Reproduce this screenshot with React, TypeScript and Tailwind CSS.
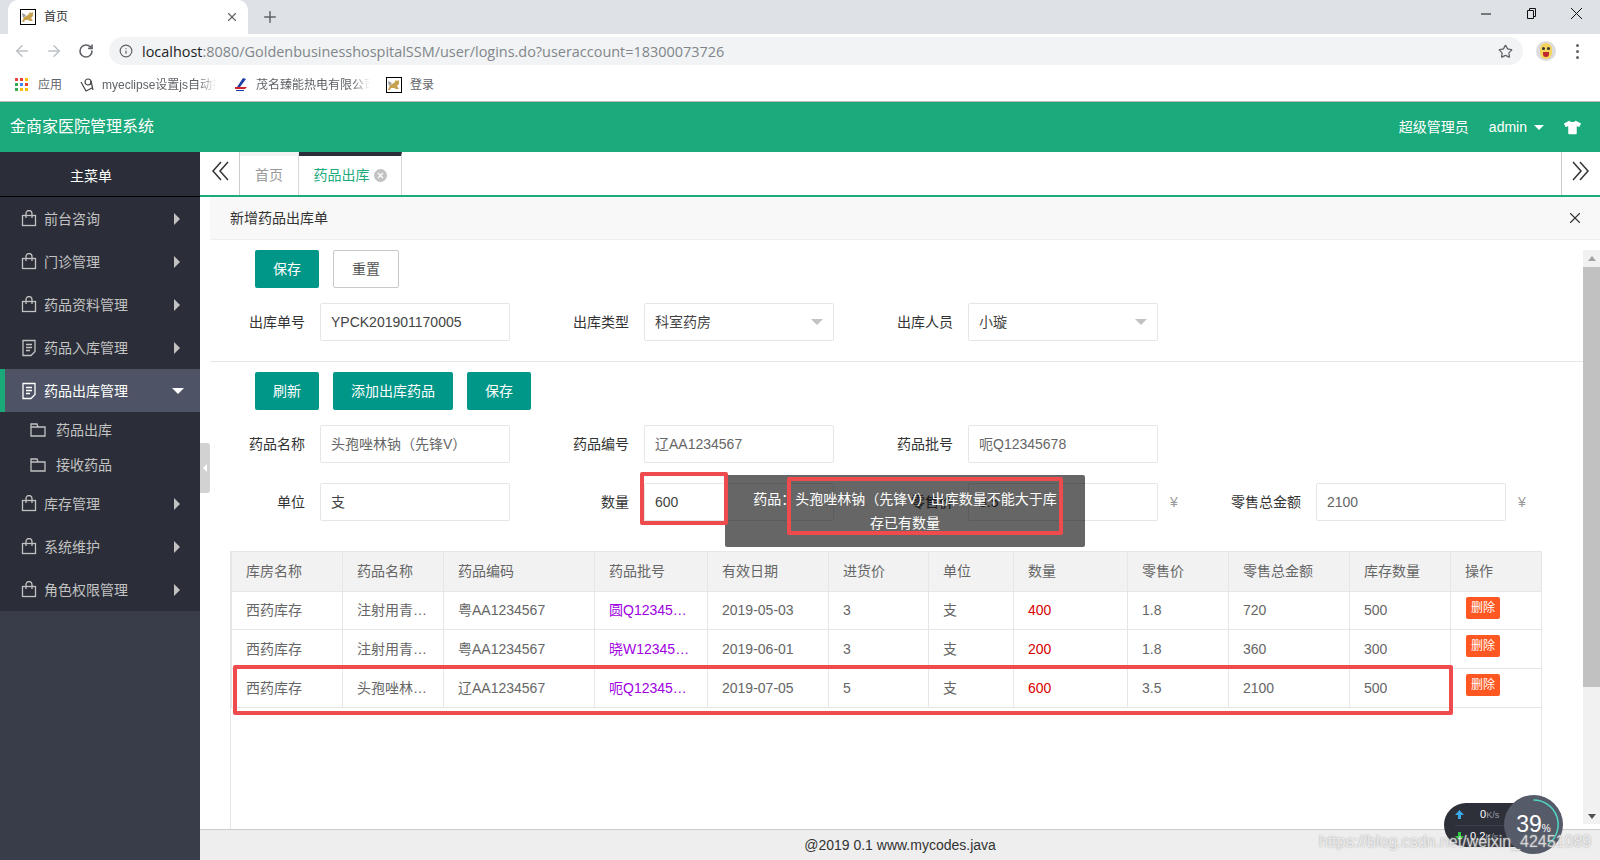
import { ArrowLeft, ArrowRight, RotateCw, Info, Star, Plus, X } from "lucide-react";
import { FaTshirt } from "react-icons/fa";

const Favicon = () => (
  <svg width="16" height="16" viewBox="0 0 16 16" className="shrink-0">
    <rect x="0.5" y="0.5" width="15" height="15" fill="#fff" stroke="#000" />
    <path d="M2 13 4 8l4-2 2-3 1 1 2-1v4l-2 2 2 3h-3L8 11H5l-1 2z" fill="#c9a24f" />
    <path d="M2 4l4 2-3 3z" fill="#999" />
  </svg>
);

const BagIcon = () => (
  <svg width="16" height="17" viewBox="0 0 16 17" fill="none" stroke="currentColor" strokeWidth="1.3" className="shrink-0">
    <rect x="1.5" y="5.5" width="13" height="10" />
    <path d="M5 8V3.5a3 3 0 0 1 6 0V8" />
  </svg>
);

const DocIcon = () => (
  <svg width="16" height="18" viewBox="0 0 16 18" fill="none" stroke="currentColor" strokeWidth="1.3" className="shrink-0">
    <path d="M2 1.5h12v11l-4 4H2z" />
    <path d="M5 5.5h6M5 8.5h6M5 11.5h4" />
  </svg>
);

const FolderIcon = () => (
  <svg width="16" height="14" viewBox="0 0 16 14" fill="none" stroke="currentColor" strokeWidth="1.3" className="shrink-0">
    <path d="M1 1h6l1 3h7v9H1zM1 4h7" />
  </svg>
);

const Menu = ({ label, icon, active }: { label: string; icon: "bag" | "doc"; active?: boolean }) => (
  <div
    className={`flex h-[43px] items-center pl-[21px] pr-[16px] ${
      active ? "bg-[#4e5465] text-white shadow-[inset_5px_0_0_#1aaa7a]" : "text-[#c2c2c2]"
    }`}
  >
    {icon === "bag" ? <BagIcon /> : <DocIcon />}
    <span className="ml-[7px] flex-1 pt-[1px] text-[14px]">{label}</span>
    {active ? (
      <span className="border-x-[6px] border-t-[6px] border-x-transparent border-t-white" />
    ) : (
      <span className="mr-[4px] border-y-[6px] border-l-[6px] border-y-transparent border-l-[#c2c2c2]" />
    )}
  </div>
);

const SubMenu = ({ label }: { label: string }) => (
  <div className="flex h-[35px] items-center pl-[30px] text-[14px] text-[#c2c2c2]">
    <FolderIcon />
    <span className="ml-[10px] pt-[1px]">{label}</span>
  </div>
);

const Btn = ({ children, plain }: { children: string; plain?: boolean }) => (
  <button
    className={`h-[38px] rounded-[2px] px-[18px] text-[14px] ${
      plain ? "border border-[#c9c9c9] bg-white text-[#555]" : "bg-[#009688] text-white"
    }`}
  >
    {children}
  </button>
);

const Field = ({ label, value, select, yuan, muted }: { label: string; value: string; select?: boolean; yuan?: boolean; muted?: boolean }) => (
  <div className="flex items-center">
    <label className="w-[90px] shrink-0 whitespace-nowrap pr-[15px] text-right text-[14px] text-[#333]">{label}</label>
    <div
      className={`relative flex h-[38px] w-[190px] items-center rounded-[2px] border border-[#e6e6e6] bg-white pl-[10px] pt-[1px] text-[14px] ${
        muted ? "text-[#666]" : "text-[#444]"
      }`}
    >
      {value}
      {select && <span className="absolute right-[10px] top-[15px] border-x-[6px] border-t-[6px] border-x-transparent border-t-[#c2c2c2]" />}
    </div>
    {yuan && <span className="ml-[12px] w-[16px] text-[14px] text-[#999]">¥</span>}
  </div>
);

const columns = ["库房名称", "药品名称", "药品编码", "药品批号", "有效日期", "进货价", "单位", "数量", "零售价", "零售总金额", "库存数量", "操作"];
const widths = [111, 101, 151, 113, 121, 100, 85, 114, 101, 121, 101, 91];

const rows = [
  { drug: "注射用青霉素钠", code: "粤AA1234567", batch: "圆Q12345678", date: "2019-05-03", buy: "3", qty: "400", sale: "1.8", total: "720", stock: "500", h: "h-[38px]" },
  { drug: "注射用青霉素钠", code: "粤AA1234567", batch: "晓W12345678", date: "2019-06-01", buy: "3", qty: "200", sale: "1.8", total: "360", stock: "300", h: "h-[39px]" },
  { drug: "头孢唑林钠（先锋V）", code: "辽AA1234567", batch: "呃Q12345678", date: "2019-07-05", buy: "5", qty: "600", sale: "3.5", total: "2100", stock: "500", h: "h-[39px]" },
];

const Cell = ({ children, className = "" }: { children: React.ReactNode; className?: string }) => (
  <td className={`overflow-hidden border border-[#e6e6e6] py-0 pl-[14px] pr-[14px] text-[14px] text-ellipsis whitespace-nowrap text-[#666] ${className}`}>{children}</td>
);

export default function App() {
  return (
    <div className="relative flex h-[860px] w-[1600px] flex-col overflow-hidden bg-white font-['Liberation_Sans','Noto_Sans_CJK_SC',sans-serif]">
      {/* browser tab strip */}
      <div className="flex h-[34px] shrink-0 items-end bg-[#dee1e6] pl-[8px]">
        <div className="flex h-[34px] w-[240px] items-center rounded-t-[10px] bg-white pl-[12px] pr-[9px]">
          <Favicon />
          <span className="ml-[8px] flex-1 text-[12px] text-[#333]">首页</span>
          <X size={14} strokeWidth={2} className="text-[#5f6368]" />
        </div>
        <Plus size={18} strokeWidth={2} className="mb-[8px] ml-[13px] text-[#5f6368]" />
        <div className="mb-[13px] ml-auto flex items-center gap-[30px] pr-[16px]">
          <svg width="15" height="15" viewBox="0 0 15 15" stroke="#111" fill="none"><path d="M2 8h10" /></svg>
          <svg width="15" height="15" viewBox="0 0 15 15" stroke="#111" fill="none"><path d="M3.5 4.5h6v8h-6zM5.5 4.5v-2h6v8h-2" /></svg>
          <svg width="15" height="15" viewBox="0 0 15 15" stroke="#111" fill="none"><path d="M2 2l11 11M13 2 2 13" /></svg>
        </div>
      </div>

      {/* address bar */}
      <div className="flex h-[34px] shrink-0 items-center bg-white">
        <ArrowLeft size={18} className="ml-[13px] text-[#bdc1c6]" />
        <ArrowRight size={18} className="ml-[14px] text-[#bdc1c6]" />
        <RotateCw size={16} strokeWidth={2.4} className="ml-[15px] text-[#5f6368]" />
        <div className="ml-[15px] flex h-[28px] w-[1414px] items-center rounded-full bg-[#f1f3f4] pl-[10px] pr-[10px]">
          <Info size={14} className="text-[#5f6368]" />
          <span className="ml-[9px] flex-1 pt-[1px] font-['Open_Sans',sans-serif] text-[14.45px] text-[#80868b]">
            <span className="text-[#202124]">localhost</span>:8080/GoldenbusinesshospitalSSM/user/logins.do?useraccount=18300073726
          </span>
          <Star size={15} strokeWidth={2} className="text-[#5f6368]" />
        </div>
        <div className="ml-[13px] flex h-[20px] w-[20px] items-center justify-center rounded-full bg-[#dcdcdc]">
          <div className="relative h-[16px] w-[12px] rounded-full bg-[#f4d35e]">
            <span className="absolute left-[2px] top-[4px] h-[3px] w-[3px] rounded-full bg-[#333]" />
            <span className="absolute right-[2px] top-[4px] h-[3px] w-[3px] rounded-full bg-[#333]" />
            <span className="absolute bottom-[2px] left-[3px] h-[5px] w-[6px] rounded-b-full bg-[#c0272d]" />
          </div>
        </div>
        <div className="ml-[20px] flex flex-col gap-[3px]">
          <span className="h-[3px] w-[3px] rounded-full bg-[#5f6368]" />
          <span className="h-[3px] w-[3px] rounded-full bg-[#5f6368]" />
          <span className="h-[3px] w-[3px] rounded-full bg-[#5f6368]" />
        </div>
      </div>

      {/* bookmarks */}
      <div className="flex h-[34px] shrink-0 items-center border-b border-[#bbb] bg-white pl-[15px] text-[12px] text-[#5f6368]">
        <div className="grid w-[13px] grid-cols-3 gap-[2px]">
          <span className="h-[3px] bg-[#ea4335]" /><span className="h-[3px] bg-[#ea4335]" /><span className="h-[3px] bg-[#fbbc05]" />
          <span className="h-[3px] bg-[#34a853]" /><span className="h-[3px] bg-[#4285f4]" /><span className="h-[3px] bg-[#ea4335]" />
          <span className="h-[3px] bg-[#34a853]" /><span className="h-[3px] bg-[#fbbc05]" /><span className="h-[3px] bg-[#fbbc05]" />
        </div>
        <span className="ml-[10px] w-[42px]">应用</span>
        <svg width="14" height="16" viewBox="0 0 14 16" fill="none" stroke="#444" strokeWidth="1.2">
          <circle cx="8" cy="5" r="3" /><path d="M1 5l5 9 6-3M11 4l2 9" />
        </svg>
        <span className="ml-[8px] w-[114px] overflow-hidden whitespace-nowrap [mask-image:linear-gradient(to_right,#000_85%,transparent)]">myeclipse设置js自动提示</span>
        <svg width="14" height="15" viewBox="0 0 14 15" className="ml-[18px]">
          <path d="M9 1l3 1-6 8H3z" fill="#1f3fa8" /><path d="M1 10h12l-2 2H1z" fill="#d2232a" /><path d="M2 13h8v1H2z" fill="#1f3fa8" />
        </svg>
        <span className="ml-[8px] w-[114px] overflow-hidden whitespace-nowrap [mask-image:linear-gradient(to_right,#000_85%,transparent)]">茂名臻能热电有限公司</span>
        <span className="ml-[16px]"><Favicon /></span>
        <span className="ml-[8px]">登录</span>
      </div>

      {/* app header */}
      <div className="flex h-[50px] shrink-0 items-center bg-[#1baa7b] pl-[10px] pr-[19px] text-white">
        <span className="flex-1 text-[16px]">金商家医院管理系统</span>
        <span className="text-[14px]">超级管理员</span>
        <span className="ml-[20px] text-[14px]">admin</span>
        <span className="ml-[7px] border-x-[5px] border-t-[5px] border-x-transparent border-t-white" />
        <FaTshirt size={17} className="ml-[20px]" />
      </div>

      <div className="flex min-h-0 flex-1">
        {/* sidebar */}
        <aside className="flex w-[200px] shrink-0 flex-col bg-[#393d49]">
          <div className="bg-[#2b2e38]">
            <div className="flex h-[45px] items-center justify-center border-b border-black pr-[18px] pt-[4px] text-[14px] text-white">主菜单</div>
            <Menu label="前台咨询" icon="bag" />
            <Menu label="门诊管理" icon="bag" />
            <Menu label="药品资料管理" icon="bag" />
            <Menu label="药品入库管理" icon="doc" />
            <Menu label="药品出库管理" icon="doc" active />
            <SubMenu label="药品出库" />
            <SubMenu label="接收药品" />
            <Menu label="库存管理" icon="bag" />
            <Menu label="系统维护" icon="bag" />
            <Menu label="角色权限管理" icon="bag" />
          </div>
        </aside>

        <main className="flex min-w-0 flex-1 flex-col">
          {/* page tabs */}
          <div className="flex h-[45px] shrink-0 border-b-2 border-[#1baa7b]">
            <div className="flex w-[40px] shrink-0 items-start justify-center border-r border-[#ccc] pt-[9px]">
              <svg width="18" height="20" viewBox="0 0 18 20" fill="none" stroke="#333" strokeWidth="1.5"><path d="M10 1 2 10l8 9M17 1 9 10l8 9" /></svg>
            </div>
            <div className="flex w-[59px] items-center justify-center border-r border-t-[4px] border-[#d8d8d8] border-t-[#f2f2f2] text-[14px] text-[#999]">首页</div>
            <div className="flex w-[103px] items-center justify-center gap-[4px] border-r border-t-[4px] border-[#d8d8d8] border-t-[#2b2e38] text-[14px] text-[#1baa7b]">
              药品出库
              <span className="flex h-[13px] w-[13px] items-center justify-center rounded-full bg-[#c2c2c2]"><X size={9} strokeWidth={3} className="text-white" /></span>
            </div>
            <div className="ml-auto flex w-[39px] shrink-0 items-start justify-center border-l border-[#ccc] pt-[9px]">
              <svg width="18" height="20" viewBox="0 0 18 20" fill="none" stroke="#333" strokeWidth="1.5"><path d="M8 1l8 9-8 9M1 1l8 9-8 9" /></svg>
            </div>
          </div>

          <div className="flex min-h-0 flex-1 flex-col pl-[10px]">
            {/* panel title */}
            <div className="flex h-[43px] shrink-0 items-center justify-between border-b border-[#eee] bg-[#f8f8f8] pl-[20px] pr-[16px] text-[14px] text-[#333]">
              新增药品出库单
              <X size={18} strokeWidth={1.5} className="text-[#333]" />
            </div>

            <div className="flex min-h-0 flex-1">
              <div className="flex min-w-0 flex-1 flex-col">
                <div className="flex gap-[14px] pl-[45px] pt-[10px]">
                  <Btn>保存</Btn>
                  <Btn plain>重置</Btn>
                </div>
                <div className="mt-[15px] flex gap-[44px] pl-[20px]">
                  <Field label="出库单号" value="YPCK201901170005" />
                  <Field label="出库类型" value="科室药房" select />
                  <Field label="出库人员" value="小璇" select />
                </div>
                <div className="mt-[20px] border-t border-[#e6e6e6] pl-[45px] pt-[10px]">
                  <div className="flex gap-[14px]">
                    <Btn>刷新</Btn>
                    <Btn>添加出库药品</Btn>
                    <Btn>保存</Btn>
                  </div>
                </div>
                <div className="mt-[15px] flex gap-[44px] pl-[20px]">
                  <Field label="药品名称" value="头孢唑林钠（先锋V）" muted />
                  <Field label="药品编号" value="辽AA1234567" muted />
                  <Field label="药品批号" value="呃Q12345678" muted />
                </div>
                <div className="mt-[20px] flex gap-[44px] pl-[20px]">
                  <Field label="单位" value="支" />
                  <Field label="数量" value="600" />
                  <div className="flex">
                    <Field label="零售价" value="3.5" yuan />
                    <div className="ml-[40px]"><Field label="零售总金额" value="2100" yuan muted /></div>
                  </div>
                </div>

                {/* drug table */}
                <div className="ml-[20px] mt-[30px] min-h-0 w-[1312px] flex-1 border-x border-[#e6e6e6]">
                  <table className="w-full table-fixed border-collapse">
                    <colgroup>
                      {widths.map((w, i) => (
                        <col key={i} style={{ width: w }} />
                      ))}
                    </colgroup>
                    <thead>
                      <tr className="h-[40px] bg-[#f2f2f2]">
                        {columns.map((c) => (
                          <Cell key={c}>{c}</Cell>
                        ))}
                      </tr>
                    </thead>
                    <tbody>
                      {rows.map((r) => (
                        <tr key={r.batch} className={r.h}>
                          <Cell>西药库存</Cell>
                          <Cell>{r.drug}</Cell>
                          <Cell>{r.code}</Cell>
                          <Cell className="!text-[#a000e0]">{r.batch}</Cell>
                          <Cell>{r.date}</Cell>
                          <Cell>{r.buy}</Cell>
                          <Cell>支</Cell>
                          <Cell className="!text-[#d90000]">{r.qty}</Cell>
                          <Cell>{r.sale}</Cell>
                          <Cell>{r.total}</Cell>
                          <Cell>{r.stock}</Cell>
                          <Cell>
                            <span className="mb-[6px] ml-[1px] block h-[22px] w-[34px] rounded-[2px] bg-[#ff5722] text-center text-[12px] leading-[22px] text-white">删除</span>
                          </Cell>
                        </tr>
                      ))}
                    </tbody>
                  </table>
                </div>
              </div>

              {/* scrollbar */}
              <div className="mb-[5px] mt-[10px] flex w-[17px] shrink-0 flex-col items-center bg-[#f1f1f1]">
                <span className="mt-[6px] border-x-[4px] border-b-[5px] border-x-transparent border-b-[#a3a3a3]" />
                <div className="mt-[6px] h-[420px] w-full bg-[#c1c1c1]" />
                <span className="mb-[5px] mt-auto border-x-[4px] border-t-[5px] border-x-transparent border-t-[#505050]" />
              </div>
            </div>
          </div>

          {/* footer */}
          <div className="flex h-[31px] shrink-0 items-center justify-center border-t border-[#ccc] bg-[#eee] text-[14px] text-[#333]">@2019 0.1 www.mycodes.java</div>
        </main>
      </div>

      {/* sidebar collapse handle */}
      <div className="absolute left-[200px] top-[443px] flex h-[50px] w-[10px] items-center justify-center rounded-r-[3px] bg-[#d2d2d2]">
        <span className="border-y-[4px] border-r-[4px] border-y-transparent border-r-white" />
      </div>

      {/* layer message */}
      <div className="absolute left-[725px] top-[475px] w-[360px] rounded-[2px] bg-black/60 px-[25px] py-[12px] text-center text-[14px] leading-[24px] text-white">
        药品：头孢唑林钠（先锋V）出库数量不能大于库存已有数量
      </div>

      {/* annotations */}
      <div className="absolute left-[640px] top-[472px] h-[53px] w-[88px] rounded-[2px] border-[4px] border-[#ee4b4f]" />
      <div className="absolute left-[787px] top-[477px] h-[58px] w-[276px] rounded-[2px] border-[4px] border-[#ee4b4f]" />
      <div className="absolute left-[233px] top-[665px] h-[50px] w-[1220px] rounded-[2px] border-[4px] border-[#ee4b4f]" />

      {/* net speed widget */}
      <div className="absolute left-[1444px] top-[803px] flex h-[44px] w-[90px] flex-col rounded-l-[22px] bg-[#2d3039] pl-[11px] text-[11px] text-white">
        <div className="flex h-[22px] items-center">
          <svg width="9" height="9" viewBox="0 0 9 9" fill="#39a9e8"><path d="M4.5 0 9 5H6v4H3V5H0z" /></svg>
          <span className="ml-[16px]">0<span className="text-[9px] text-[#9a9ea8]">K/s</span></span>
        </div>
        <div className="flex h-[22px] items-center border-t border-[#3b3f4a]">
          <svg width="9" height="9" viewBox="0 0 9 9" fill="#2ecc40"><path d="M4.5 9 9 4H6V0H3v4H0z" /></svg>
          <span className="ml-[6px]">0.2<span className="text-[9px] text-[#9a9ea8]">K/s</span></span>
        </div>
      </div>
      <div className="absolute left-[1504px] top-[795px] flex h-[59px] w-[59px] items-center justify-center rounded-full bg-[#565b69] text-[23px] font-light text-white">
        39<span className="mt-[8px] text-[10px]">%</span>
        <svg width="59" height="59" viewBox="0 0 59 59" fill="none" className="absolute inset-0">
          <path d="M29.5 5a24.5 24.5 0 0 1 15 44" stroke="#4fd8c4" strokeWidth="1.5" />
        </svg>
      </div>

      {/* image watermark */}
      <div className="absolute left-[1319px] top-[831px] text-[16px] leading-[22px] text-white/70 [text-shadow:0_0_2px_#999]">https://blog.csdn.net/weixin_42451089</div>
    </div>
  );
}
